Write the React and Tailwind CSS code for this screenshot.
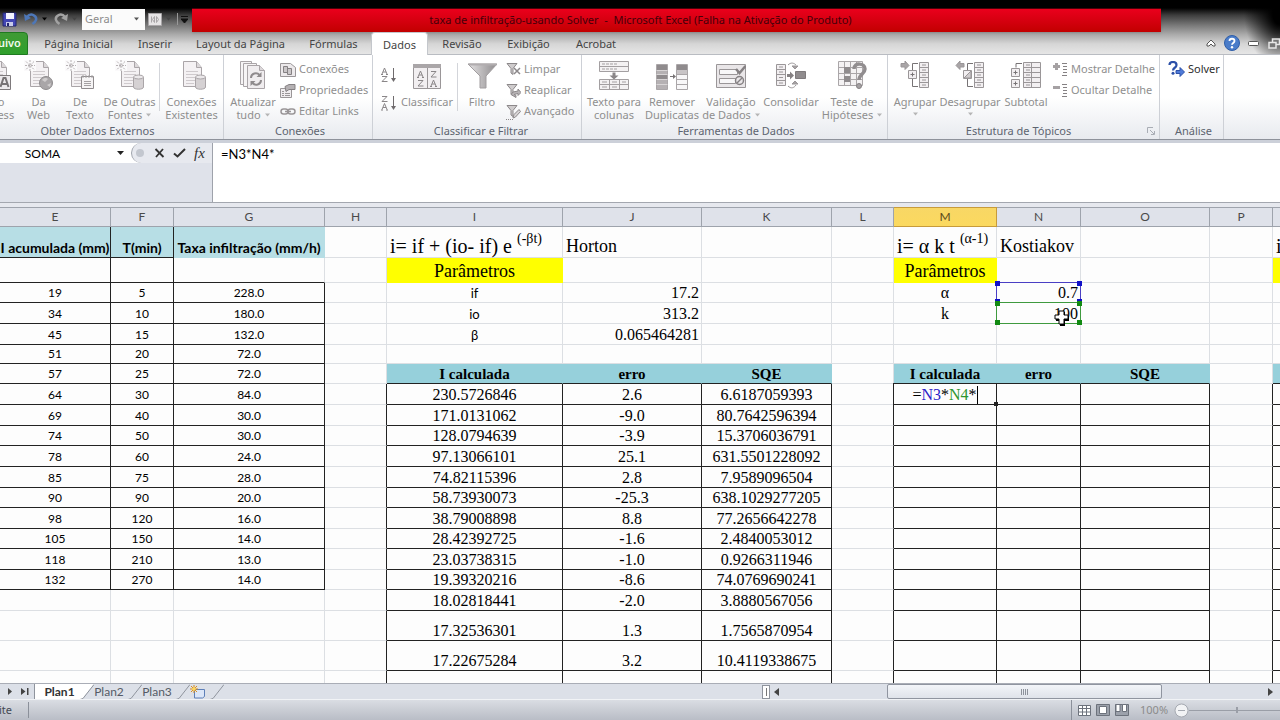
import React from "react";

const UI = "font-['Noto_Sans',sans-serif]";

/* ---------- small shared drawings ---------- */

function Caret({ className = "" }) {
  return (
    <svg className={className} width="7" height="4" viewBox="0 0 7 4" aria-hidden="true">
      <path d="M0 0h7L3.5 4z" fill="currentColor" />
    </svg>
  );
}

function Page({ children, spark = true, cyl = false }) {
  return (
    <svg width="30" height="30" viewBox="0 0 30 30" fill="none" stroke="#aaa5a8" aria-hidden="true">
      <path d="M6.500 1.500h13l5 6v19h-18z" fill="#f4f1f3" />
      <path d="M19.500 1.500v6h5" fill="#dcd8da" />
      <path d="M9 11.500h12M9 14.500h12M9 17.500h12M9 20.500h10M9 23.500h8" stroke="#cfcacd" />
      {spark && (
        <>
          <path d="M0 0h12v11h-12z" fill="#fbfafb" stroke="none" />
          <path d="M6 0v11M1 5.500h10M2 1.500l8 8M10 1.500l-8 8" stroke="#b7b2b4" strokeDasharray="2 1" />
        </>
      )}
      {cyl && (
        <>
          <path d="M18.500 17v10c0 3 10 3 10 0v-10" fill="#d5d1d3" />
          <ellipse cx="23.500" cy="17" rx="5" ry="2" fill="#ebe8ea" />
        </>
      )}
      {children}
    </svg>
  );
}

function WebIcon() {
  return (
    <Page>
      <circle cx="22" cy="23" r="6.500" fill="#a9a6a8" stroke="#8f8c8e" />
      <path d="M18 20c2-3 5-2 6-1l-3 3zM23 25l4-2-1 4z" fill="#cfcccd" stroke="none" />
    </Page>
  );
}

function TextIcon() {
  return (
    <Page>
      <path d="M16.500 16.500h12v12h-12z" fill="#f6f4f5" stroke="#8f8b8d" />
      <path d="M18 15v3M21 15v3M24 15v3M27 15v3M19 21.500h7M19 23.500h7M19 25.500h7" stroke="#a5a1a3" />
    </Page>
  );
}

function AccessIcon() {
  return (
    <Page>
      <path d="M15.500 15.500h13v14h-13z" fill="#ece9eb" stroke="#7e7a7c" />
      <path d="M18.500 27l3-9h2l3 9M19.500 24h6" stroke="#777375" strokeWidth="2" />
    </Page>
  );
}

function RefreshIcon() {
  return (
    <svg width="30" height="30" viewBox="0 0 30 30" fill="none" stroke="#aaa5a8" aria-hidden="true">
      <path d="M2.500 1.500h11v23h-11z" fill="#f6f4f5" />
      <path d="M5.500 3.500h13v23h-13z" fill="#f6f4f5" />
      <path d="M9.500 5.500h12l5 5v18h-17z" fill="#f0edef" />
      <path d="M21.500 5.500v5h5" fill="#dcd8da" />
      <path d="M13 18c0-5 6-6 8.500-3M23 20c0 5-6 6-8.500 3" stroke="#8f8b8d" strokeWidth="2" />
      <path d="M23.500 12v5h-5zM12.500 26v-5h5z" fill="#8f8b8d" stroke="none" />
    </svg>
  );
}

function SortBoxIcon() {
  return (
    <svg width="30" height="30" viewBox="0 0 30 30" fill="none" stroke="#9a9698" aria-hidden="true">
      <path d="M1.500 4.500h27v24h-27z" fill="#f2eff1" />
      <path d="M1 4h28v4h-28z" fill="#aaa6a8" stroke="none" />
      <path d="M15.500 8v20" />
      <path d="M6 17l2.500-6 2.500 6M7 15h3M5 17.500h2M10 17.500h2M6 20.500h5l-5 5.500h5.500M19 11.500h5l-5 5.500h5.500M19 26l2.500-6 2.500 6M20 24h3M18 26.500h2M23 26.500h2" stroke="#8a8688" />
    </svg>
  );
}

function SortIcon({ down = true }) {
  return (
    <svg width="16" height="16" viewBox="0 0 16 16" fill="none" stroke="#8a8688" aria-hidden="true">
      {down ? (
        <path d="M1 7l2.500-6 2.500 6M2 5h3M0 7.500h2M5 7.500h2M1 9.500h5l-5 5h5.500" />
      ) : (
        <path d="M1 1.500h5l-5 5h5.500M1 14.500l2.500-6 2.500 6M2 12.500h3M0 15h2M5 15h2" />
      )}
      <path d="M12.500 1v11" stroke="#6f6b6d" />
      <path d="M10 11h5l-2.500 4z" fill="#6f6b6d" stroke="none" />
    </svg>
  );
}

function FunnelIcon() {
  return (
    <svg width="30" height="30" viewBox="0 0 30 30" aria-hidden="true">
      <defs>
        <linearGradient id="funnel" x1="0" x2="1" y1="0" y2="0">
          <stop offset="0" stopColor="#e4e2e3" />
          <stop offset="1" stopColor="#8e8b8d" />
        </linearGradient>
      </defs>
      <path d="M1 4h29l-11 12v12h-6v-12z" fill="url(#funnel)" stroke="#a19d9f" />
      <path d="M1.500 3.500h28v2h-27z" fill="#b1adaf" />
    </svg>
  );
}

function MiniFunnel({ kind }) {
  return (
    <svg width="15" height="16" viewBox="0 0 15 16" fill="none" stroke="#8c888a" aria-hidden="true">
      <path d="M1 1.500h10l-4 5v6l-2-1.500v-4.500z" fill="#cfcccd" />
      {kind === "clear" && <path d="M8 6l6 6M14 6l-6 6" strokeWidth="1.500" />}
      {kind === "again" && <path d="M7 9l5-1v-2l3 3.500-3 3v-2l-4 1 2 1v2l-5-3z" fill="#b8b4b6" />}
      {kind === "adv" && (
        <>
          <path d="M7 14l1-3.500 5-5 1.500 2-5 5.500z" fill="#d8d5d6" />
          <path d="M0 15.500h8" strokeDasharray="1 1" />
        </>
      )}
    </svg>
  );
}

function ConnIcon() {
  return (
    <svg width="16" height="16" viewBox="0 0 16 16" fill="none" stroke="#9a9698" aria-hidden="true">
      <path d="M.5 1.500h10l5 4v9h-15z" fill="#ece9eb" />
      <path d="M3.500 4.500h4v6h-4zM7.500 6.500h4v6h-4z" fill="#cbc7c9" stroke="#858183" />
    </svg>
  );
}

function PropIcon() {
  return (
    <svg width="16" height="16" viewBox="0 0 16 16" fill="none" stroke="#9a9698" aria-hidden="true">
      <path d="M.5 5.500h11v9h-11z" fill="#f0edef" />
      <path d="M5 3.500l4-2h6v5h-6l-3 2z" fill="#b5b1b3" stroke="#858183" />
      <path d="M2 8.500h2M5 10.500h5M2 10.500h2M2 12.500h2M5 12.500h5" />
    </svg>
  );
}

function LinkIcon() {
  return (
    <svg width="16" height="16" viewBox="0 0 16 16" fill="none" stroke="#9a9698" strokeWidth="1.500" aria-hidden="true">
      <rect x="1" y="5" width="7" height="5" rx="2.500" />
      <rect x="8" y="5" width="7" height="5" rx="2.500" />
      <path d="M5 7.500h6" />
    </svg>
  );
}

function TextColsIcon() {
  return (
    <svg width="30" height="30" viewBox="0 0 30 30" fill="none" stroke="#a39fa1" aria-hidden="true">
      <path d="M.5 1.500h29v10h-29z" fill="#f4f2f3" />
      <path d="M.5 6.500h29" />
      <path d="M3 4h15M3 9h15" strokeDasharray="3 1" />
      <path d="M13.500 12.500h3v3h3l-4.500 4-4.500-4h3z" fill="#8a8688" stroke="none" />
      <path d="M.5 19.500h29v10h-29zM10.500 19.500v10M20.500 19.500v10M.5 24.500h29" fill="#f4f2f3" />
      <path d="M3 22h5M13 22h5M23 22h4M3 27h5M13 27h5" />
    </svg>
  );
}

function DupIcon() {
  return (
    <svg width="32" height="30" viewBox="0 0 32 30" fill="none" stroke="#aaa6a8" aria-hidden="true">
      <path d="M.5 4.500h11v25h-11z" fill="#b5b1b3" />
      <path d="M1 5h10v5h-10zM1 15h10v4h-10z" fill="#8f8b8d" stroke="none" />
      <path d="M.5 10.500h11M.5 14.500h11M.5 19.500h11M.5 24.500h11" stroke="#d8d5d6" />
      <path d="M14 16.500h4" stroke="#777375" />
      <path d="M17 14l3 2.500-3 2.500z" fill="#777375" stroke="none" />
      <path d="M20.500 4.500h11v25h-11z" fill="#f8f7f8" />
      <path d="M21 5h10v5h-10z" fill="#8f8b8d" stroke="none" />
      <path d="M21 10h10v4h-10z" fill="#c8c4c6" stroke="none" />
      <path d="M20.500 14.500h11M20.500 19.500h11M20.500 24.500h11" />
    </svg>
  );
}

function ValidIcon() {
  return (
    <svg width="30" height="30" viewBox="0 0 30 30" fill="none" stroke="#9a9698" aria-hidden="true">
      <path d="M.5 4.500h29v23h-29z" fill="#e9e6e8" />
      <path d="M3.500 9.500h18v5h-18zM3.500 18.500h16v5h-16z" fill="#f8f7f8" />
      <path d="M20 9l3.500 4 6-7" stroke="#858183" strokeWidth="2.500" />
      <circle cx="23.500" cy="20.500" r="4" stroke="#858183" strokeWidth="1.500" fill="#e9e6e8" />
      <path d="M21 23l5-5" stroke="#858183" strokeWidth="1.500" />
    </svg>
  );
}

function ConsolidateIcon() {
  return (
    <svg width="30" height="30" viewBox="0 0 30 30" fill="none" stroke="#9a9698" aria-hidden="true">
      <path d="M.5 4.500h9v21h-9z" fill="#f2eff1" />
      <path d="M.5 9.500h9M.5 14.500h9M.5 20.500h9M3 7h4M3 12h4M3 17.500h4M3 23h4" />
      <path d="M12 5c3-3 6-2 8 0M12 26c3 3 6 2 8-1" />
      <path d="M16 6h6l-3 3zM16 24h6l-3-3z" fill="#a5a1a3" />
      <path d="M11 14h3v-2.500l4 4-4 4v-2.500h-3z" fill="#858183" stroke="none" />
      <path d="M19.500 11.500h10v7h-10z" fill="#908c8e" stroke="#7e7a7c" />
    </svg>
  );
}

function WhatIfIcon() {
  return (
    <svg width="30" height="30" viewBox="0 0 30 30" fill="none" stroke="#aaa6a8" aria-hidden="true">
      <path d="M1.500 1.500h24v24h-24z" fill="#f4f2f3" />
      <path d="M1.500 7.500h24M1.500 13.500h24M1.500 19.500h24M7.500 1.500v24M13.500 1.500v24M19.500 1.500v24" />
      <path d="M7 7h6v6h-6zM7 16h6v6h-6z" fill="#8f8b8d" stroke="none" />
      <path d="M17 9c0-7 11-6 11 0 0 5-6 5-6 11" stroke="#918d8f" strokeWidth="3.500" />
      <circle cx="22" cy="26" r="2.500" fill="#a5a1a3" stroke="#858183" />
    </svg>
  );
}

function GroupIcon({ out = false }) {
  return (
    <svg width="30" height="30" viewBox="0 0 30 30" fill="none" stroke="#9a9698" aria-hidden="true">
      <path d="M19.500 2.500h9v25h-9z" fill="#f2eff1" />
      <path d="M19.500 7.500h9M19.500 12.500h9M19.500 17.500h9M19.500 22.500h9M22 5h4M22 10h4M22 15h4M22 20h4M22 25h4" />
      <path d="M18 3.500h-5.500v8M12.500 19v7.500h5.500" stroke="#777375" />
      <path d="M8.500 10.500h8v8h-8z" fill="#f2eff1" />
      {out ? <path d="M9 18l7-7v7z" fill="#d0ccce" /> : <path d="M10.500 14.500h4M12.500 12.500v4" stroke="#777375" />}
      {out ? (
        <path d="M9 3.500h-4v-2.500l-4 4.500 4 4v-2.500h4z" fill="#a9a5a7" />
      ) : (
        <path d="M1 3.500h4v-2.500l4 4.500-4 4v-2.500h-4z" fill="#a9a5a7" />
      )}
    </svg>
  );
}

function SubtotalIcon() {
  return (
    <svg width="30" height="30" viewBox="0 0 30 30" fill="none" stroke="#9a9698" aria-hidden="true">
      <path d="M12.500 2.500h17v25h-17z" fill="#f2eff1" />
      <path d="M12.500 7.500h17M12.500 12.500h17M12.500 17.500h17M12.500 22.500h17M20.500 2.500v25M15 5h4M15 10h4M15 15h4M15 20h4M15 25h4" />
      <path d="M11 3.500h-6v4" stroke="#777375" />
      <path d="M.5 8.500h8v8h-8zM.5 19.500h8v8h-8z" fill="#f2eff1" />
      <path d="M2.500 12.500h4M4.500 10.500v4M2.500 23.500h4M4.500 21.500v4" stroke="#777375" />
    </svg>
  );
}

function DetailIcon({ plus = false }) {
  return (
    <svg width="16" height="16" viewBox="0 0 16 16" fill="none" stroke="#858183" aria-hidden="true">
      {plus ? <path d="M3 1h3v2h2v3h-2v2h-3v-2h-2v-3h2z" fill="#a5a1a3" stroke="none" /> : <path d="M1 3h7v3h-7z" fill="#a5a1a3" stroke="none" />}
      <path d="M10 1.500h5M11 4.500h4M11 7.500h4M11 10.500h4M10 13.500h5" />
    </svg>
  );
}

function SolverIcon() {
  return (
    <svg width="17" height="17" viewBox="0 0 17 17" fill="none" aria-hidden="true">
      <path d="M1.500 4c0-4 7-4 7 0 0 3-3.500 2.500-3.500 5.500" stroke="#2c50a8" strokeWidth="2.200" />
      <circle cx="5" cy="12.300" r="1.500" fill="#2c50a8" />
      <path d="M8 9.500h4v-3l4.500 4.500-4.500 4.500v-3h-4z" fill="#4f7bd8" stroke="#2c50a8" />
    </svg>
  );
}

/* ---------- ribbon pieces ---------- */

function Big({ icon, lines, caret = false, className }) {
  return (
    <button type="button" className={`flex shrink-0 flex-col items-center text-[11px] leading-[13px] text-[#8f8f8f] ${className}`}>
      <span className="mt-1 mb-1 flex h-8 items-center">{icon}</span>
      {lines.map((l, i) => (
        <span key={l} className="flex items-center gap-1 whitespace-nowrap">
          {l}
          {caret && lines.length > 1 && i === lines.length - 1 && <Caret className="w-[5px] text-[#b5b5b5]" />}
        </span>
      ))}
      {caret && lines.length === 1 && <Caret className="mt-1 w-[5px] text-[#b5b5b5]" />}
    </button>
  );
}

function Small({ icon, text, dark = false }) {
  return (
    <button type="button" className={`flex h-[21px] items-center gap-[3px] text-[11px] whitespace-nowrap ${dark ? "text-[#2d2d2d]" : "text-[#8f8f8f]"}`}>
      {icon}
      {text}
    </button>
  );
}

function Group({ title, className, launcher = false, children }) {
  return (
    <section className={`flex shrink-0 flex-col border-r border-[#cdd0d6] ${className}`}>
      <div className="flex h-[68px]">{children}</div>
      <div className="flex h-4 items-center pr-[26px] text-[11px] text-[#5d6470] only:pr-0 has-[button]:pr-1 has-[.wide]:pr-0">
        <span className="wide flex-1 text-center whitespace-nowrap">{title}</span>
        {launcher && (
          <button type="button" aria-label={`Mais opções de ${title}`} className="mr-1">
            <svg width="8" height="8" viewBox="0 0 8 8" fill="none" stroke="#a9adb5">
              <path d="M.5 6v-5.500h5.500M3 3l4 4M7.500 4v3.500h-3.500" />
            </svg>
          </button>
        )}
      </div>
    </section>
  );
}

const Divider = () => <span className="mt-2 h-12 w-px shrink-0 bg-[#d3d5da]" />;

function Ribbon() {
  return (
    <div className="flex h-[85px] shrink-0 overflow-hidden border-b border-[#8e929b] bg-linear-to-b from-white from-50% to-[#e8eaef]">
      <section className="flex w-[224px] shrink-0 flex-col border-r border-[#cdd0d6]">
        <div className="flex h-[68px] pl-px">
          <Big icon={<AccessIcon />} lines={["Do", "Access"]} className="-ml-[24px] w-10" />
          <Big icon={<WebIcon />} lines={["Da", "Web"]} className="w-[43px]" />
          <Big icon={<TextIcon />} lines={["De", "Texto"]} className="w-10" />
          <Big icon={<Page cyl />} lines={["De Outras", "Fontes"]} caret className="w-[59px]" />
          <Divider />
          <Big icon={<Page cyl spark={false} />} lines={["Conexões", "Existentes"]} className="w-[63px]" />
        </div>
        <div className="flex h-4 items-center justify-center pr-7 text-[11px] text-[#5d6470]">Obter Dados Externos</div>
      </section>
      <Group title="Conexões" className="w-[149px] pl-1">
        <Big icon={<RefreshIcon />} lines={["Atualizar", "tudo"]} caret className="w-[50px]" />
        <div className="flex flex-col pt-1 pl-[2px]">
          <Small icon={<ConnIcon />} text="Conexões" />
          <Small icon={<PropIcon />} text="Propriedades" />
          <Small icon={<LinkIcon />} text="Editar Links" />
        </div>
      </Group>
      <Group title="Classificar e Filtrar" className="w-[209px] pl-2">
        <div className="flex w-4 flex-col gap-3 pt-3">
          <button type="button" aria-label="Classificar de A a Z"><SortIcon /></button>
          <button type="button" aria-label="Classificar de Z a A"><SortIcon down={false} /></button>
        </div>
        <Big icon={<SortBoxIcon />} lines={["Classificar"]} className="w-[60px]" />
        <Divider />
        <Big icon={<FunnelIcon />} lines={["Filtro"]} className="w-12" />
        <div className="flex flex-col pt-1">
          <Small icon={<MiniFunnel kind="clear" />} text="Limpar" />
          <Small icon={<MiniFunnel kind="again" />} text="Reaplicar" />
          <Small icon={<MiniFunnel kind="adv" />} text="Avançado" />
        </div>
      </Group>
      <Group title="Ferramentas de Dados" className="w-[306px] pl-[3px]">
        <Big icon={<TextColsIcon />} lines={["Texto para", "colunas"]} className="w-[58px]" />
        <Big icon={<DupIcon />} lines={["Remover", "Duplicatas"]} className="w-[58px]" />
        <Big icon={<ValidIcon />} lines={["Validação", "de Dados"]} caret className="w-[60px]" />
        <Big icon={<ConsolidateIcon />} lines={["Consolidar"]} className="w-[60px]" />
        <Big icon={<WhatIfIcon />} lines={["Teste de", "Hipóteses"]} caret className="w-[62px]" />
      </Group>
      <Group title="Estrutura de Tópicos" launcher className="w-[272px] pl-[2px]">
        <Big icon={<GroupIcon />} lines={["Agrupar"]} caret className="w-[50px]" />
        <Big icon={<GroupIcon out />} lines={["Desagrupar"]} caret className="w-[60px]" />
        <Big icon={<SubtotalIcon />} lines={["Subtotal"]} className="w-[52px]" />
        <div className="flex flex-col pt-1">
          <Small icon={<DetailIcon plus />} text="Mostrar Detalhe" />
          <Small icon={<DetailIcon />} text="Ocultar Detalhe" />
        </div>
      </Group>
      <Group title="Análise" className="w-16 pl-1">
        <div className="flex flex-col pt-1 pl-1">
          <Small icon={<SolverIcon />} text="Solver" dark />
        </div>
      </Group>
    </div>
  );
}

/* ---------- window header ---------- */

const TABS = [
  ["Página Inicial", "w-[93px]"],
  ["Inserir", "w-[60px]"],
  ["Layout da Página", "w-[111px]"],
  ["Fórmulas", "w-[75px]"],
  ["Dados", "w-[57px]"],
  ["Revisão", "w-[68px]"],
  ["Exibição", "w-[65px]"],
  ["Acrobat", "w-[70px]"],
];

function Header() {
  return (
    <header className="shrink-0 bg-[radial-gradient(ellipse_36px_52px_at_100%_14px,#000_20%,transparent),linear-gradient(to_bottom,#000_8px,#3c3c3c_15px,#777_25px,#a8a8a8_34px,#d6d6d6_44px,#e6e6e6_54px)]">
      <div className="flex h-8 items-start pt-2">
        <div className="flex h-[22px] w-48 shrink-0 items-center">
          <button type="button" aria-label="Salvar" className="ml-[2px]">
            <svg width="15" height="15" viewBox="0 0 15 15">
              <path d="M1 1h13v13H1z" fill="#4347b4" stroke="#23266e" />
              <path d="M4 1h8v6H4z" fill="#f4f5ff" />
              <path d="M4 10h7v4H4z" fill="#c8cbea" />
              <path d="M5 11h2v3H5z" fill="#23266e" />
            </svg>
          </button>
          <button type="button" aria-label="Desfazer" className="ml-[7px]">
            <svg width="14" height="14" viewBox="0 0 14 14" fill="none">
              <path d="M3 5c4-5 10-1 9 3-.5 2-2 3-3.500 4" stroke="#4d77b8" strokeWidth="2.500" />
              <path d="M0 2l1 7 6-3z" fill="#4d77b8" />
            </svg>
          </button>
          <Caret className="ml-1 w-[5px] text-black" />
          <button type="button" aria-label="Refazer" className="ml-[7px]">
            <svg width="14" height="14" viewBox="0 0 14 14" fill="none">
              <path d="M11 5c-4-5-10-1-9 3 .5 2 2 3 3.500 4" stroke="#a2a2a2" strokeWidth="2.500" />
              <path d="M14 2l-1 7-6-3z" fill="#a2a2a2" />
            </svg>
          </button>
          <Caret className="ml-1 w-[5px] text-[#444]" />
          <label className="ml-[5px] flex h-[21px] w-[63px] shrink-0 items-center bg-[#fbfbfb] pl-[3px] text-[11px] text-[#8b8b8b]">
            <select aria-label="Formato de número" defaultValue="Geral" className="w-[49px] appearance-none bg-transparent outline-none">
              <option>Geral</option>
            </select>
            <Caret className="w-[5px] text-[#555]" />
          </label>
          <button type="button" aria-label="Reproduzir" className="ml-[3px]">
            <svg width="14" height="13" viewBox="0 0 14 13" fill="none" stroke="#a9a6a8">
              <path d="M.5.5h13v12h-13z" fill="#e6e4e5" />
              <path d="M3.500 3.500v6M6.500 3.500l-2 3 2 3zM8.500 3.500l2 3-2 3z" />
            </svg>
          </button>
          <Caret className="ml-1 w-[5px] text-[#444]" />
          <span className="ml-[6px] h-3 w-px bg-[#999]" />
          <button type="button" aria-label="Personalizar barra" className="ml-[3px]">
            <svg width="7" height="7" viewBox="0 0 7 7">
              <path d="M0 .5h7M0 3h7L3.500 7z" fill="#111" stroke="#111" />
            </svg>
          </button>
        </div>
        <h1 className="mr-[119px] flex h-6 flex-1 items-center justify-center overflow-hidden border-t border-[#4a0008] bg-linear-to-b from-[#ea001c] to-[#c20000] pr-[72px] text-[11px] whitespace-pre text-[#45000a] shadow-sm">
          taxa de infiltração-usando Solver  -  Microsoft Excel (Falha na Ativação do Produto)
        </h1>
      </div>
      <nav className="flex h-[23px] items-stretch border-b border-[#b9bcc2] text-[11px] text-[#444]">
        <button type="button" className="-ml-6 h-[23px] w-[52px] shrink-0 rounded-tr-sm border border-[#1f7a20] bg-linear-to-b from-[#3f9a35] to-[#2fa02c] pr-1 font-semibold text-[#f1fbef]">
          Arquivo
        </button>
        <span className="w-1 shrink-0" />
        {TABS.map(([name, w]) => (
          <button
            key={name}
            type="button"
            className={`shrink-0 pt-[2px] whitespace-nowrap ${w} ${name === "Dados" ? "-mb-px rounded-t-sm border-x border-t border-[#c4c7cc] bg-white" : ""}`}
          >
            {name}
          </button>
        ))}
        <div className="ml-auto flex shrink-0 items-center">
          <button type="button" aria-label="Minimizar faixa" className="mr-2">
            <svg width="10" height="8" viewBox="0 0 10 8" fill="#fff" stroke="#555">
              <path d="M1 5l4-4 4 4v2h-2l-2-2-2 2h-2z" />
            </svg>
          </button>
          <button type="button" aria-label="Ajuda" className="mr-2">
            <svg width="16" height="16" viewBox="0 0 16 16" fill="none">
              <circle cx="8" cy="8" r="7.500" fill="#4a7cc9" stroke="#2f5ea8" />
              <path d="M5.500 6c0-3 5-3 5 0 0 2-2.500 2-2.500 3.800" stroke="#fff" strokeWidth="1.800" />
              <circle cx="8" cy="12.200" r="1.200" fill="#fff" />
            </svg>
          </button>
          <button type="button" aria-label="Minimizar" className="mr-[9px]">
            <svg width="11" height="5" viewBox="0 0 11 5" fill="#fff" stroke="#555">
              <rect x=".5" y=".5" width="10" height="4" rx="1" />
            </svg>
          </button>
          <button type="button" aria-label="Restaurar">
            <svg width="12" height="11" viewBox="0 0 12 11" fill="#777" stroke="#e6e6e6" strokeWidth="1.500">
              <path d="M4.500 1h7v5.500h-7z" />
              <path d="M1 4.500h7v5.500h-7z" />
            </svg>
          </button>
        </div>
      </nav>
    </header>
  );
}

function FormulaBar() {
  return (
    <div className="flex h-[60px] shrink-0 border-b border-[#a3a7af] bg-[#dfe2ea] font-[Lato,sans-serif] text-[12px]">
      <div className="h-5 w-[212px] shrink-0 border-b border-[#b4b8c0]">
        <div className="flex h-5 items-center">
          <input aria-label="Caixa de nome" defaultValue="SOMA" className="h-full w-[117px] bg-white pr-8 text-center text-black outline-none" />
          <button type="button" aria-label="Nomes" className="flex h-full w-[14px] items-center bg-white text-[#222]">
            <Caret />
          </button>
          <div className="flex h-full flex-1 items-center bg-white">
            <div className="flex h-full flex-1 items-center rounded-l-full border-l border-[#9ea2ab] bg-[#e7e9ef]">
              <span className="ml-1 h-2 w-2 rounded-full bg-[#c3c7cf]" />
              <button type="button" aria-label="Cancelar" className="ml-[10px]">
                <svg width="11" height="10" viewBox="0 0 11 10" fill="none" stroke="#333" strokeWidth="1.800">
                  <path d="M1.500 1l8 8M9 1l-7 8" />
                </svg>
              </button>
              <button type="button" aria-label="Inserir" className="ml-2">
                <svg width="13" height="10" viewBox="0 0 13 10" fill="none" stroke="#333" strokeWidth="2">
                  <path d="M1 5.500l3.500 3L12 1" />
                </svg>
              </button>
              <button type="button" aria-label="Inserir função" className="ml-2 font-['Liberation_Serif',serif] text-[15px] text-[#333] italic">
                fx
              </button>
            </div>
          </div>
        </div>
      </div>
      <textarea
        aria-label="Barra de fórmulas"
        defaultValue="=N3*N4*"
        className="min-w-0 flex-1 resize-none border-l border-[#9ea2ab] bg-white px-2 pt-[2px] text-[13px] leading-[18px] text-black outline-none"
      />
    </div>
  );
}

/* ---------- worksheet ---------- */

const COLS = [
  ["E", "w-[111px]"],
  ["F", "w-[63px]"],
  ["G", "w-[151px]"],
  ["H", "w-[62px]"],
  ["I", "w-[176px]"],
  ["J", "w-[139px]"],
  ["K", "w-[130px]"],
  ["L", "w-[62px]"],
  ["M", "w-[103px]"],
  ["N", "w-[84px]"],
  ["O", "w-[129px]"],
  ["P", "w-[63px]"],
  ["Q", "w-[140px]"],
];

const HEIGHTS = [
  "h-[31px]", "h-[25px]", "h-[20px]", "h-[21px]", "h-[21px]", "h-[19px]", "h-[20px]",
  "h-[21px]", "h-[21px]", "h-[20px]", "h-[21px]", "h-[21px]", "h-[20px]", "h-[21px]",
  "h-[20px]", "h-[21px]", "h-[20px]", "h-[21px]", "h-[30px]", "h-[30px]", "h-[30px]",
];

const MEASURED = [
  [19, 5, "228.0"], [34, 10, "180.0"], [45, 15, "132.0"], [51, 20, "72.0"], [57, 25, "72.0"],
  [64, 30, "84.0"], [69, 40, "30.0"], [74, 50, "30.0"], [78, 60, "24.0"], [85, 75, "28.0"],
  [90, 90, "20.0"], [98, 120, "16.0"], [105, 150, "14.0"], [118, 210, "13.0"], [132, 270, "14.0"],
];

const HORTON = [
  ["230.5726846", "2.6", "6.6187059393"],
  ["171.0131062", "-9.0", "80.7642596394"],
  ["128.0794639", "-3.9", "15.3706036791"],
  ["97.13066101", "25.1", "631.5501228092"],
  ["74.82115396", "2.8", "7.9589096504"],
  ["58.73930073", "-25.3", "638.1029277205"],
  ["38.79008898", "8.8", "77.2656642278"],
  ["28.42392725", "-1.6", "2.4840053012"],
  ["23.03738315", "-1.0", "0.9266311946"],
  ["19.39320216", "-8.6", "74.0769690241"],
  ["18.02818441", "-2.0", "3.8880567056"],
  ["17.32536301", "1.3", "1.7565870954"],
  ["17.22675284", "3.2", "10.4119338675"],
];

function Handles({ color }) {
  const box = color === "blue" ? "border-[#4a3fc4]" : "border-[#3f9a3f]";
  const dot = color === "blue" ? "bg-[#1010c8]" : "bg-[#128a12]";
  return (
    <span className={`pointer-events-none absolute -inset-px z-10 border ${box}`}>
      <i className={`absolute -top-0.5 -left-0.5 size-[5px] ${dot}`} />
      <i className={`absolute -top-0.5 -right-0.5 size-[5px] ${dot}`} />
      <i className={`absolute -bottom-0.5 -left-0.5 size-[5px] ${dot}`} />
      <i className={`absolute -right-0.5 -bottom-0.5 size-[5px] ${dot}`} />
    </span>
  );
}

function CrossCursor() {
  return (
    <svg className="absolute top-1.5 right-[10px] z-20" width="16" height="18" viewBox="0 0 16 18" aria-hidden="true">
      <path d="M6 3h5v4h4v5h-4v5H6v-5H2V7h4z" fill="#000" />
      <path d="M5 2h5v4h4v4h-4v5H5v-5H1V6h4z" fill="#fff" stroke="#000" />
    </svg>
  );
}

const SERIF = "font-['Liberation_Serif',serif]";

function content(col, r) {
  if (col <= 2) {
    if (r === 1) return ["I acumulada (mm)", "T(min)", "Taxa infiltração (mm/h)"][col];
    return r >= 3 && r <= 17 ? MEASURED[r - 3][col] : null;
  }
  if (col >= 4 && col <= 6 && r >= 8 && r <= 20) return HORTON[r - 8][col - 4];
  if (r === 7) return { 4: "I calculada", 5: "erro", 6: "SQE", 8: "I calculada", 9: "erro", 10: "SQE" }[col];
  const key = `${COLS[col][0]}${r}`;
  switch (key) {
    case "I1":
      return <>i= if + (io- if) e <sup className="-top-[10px] text-[14px]">(-βt)</sup></>;
    case "M1":
      return <>i= α k t <sup className="-top-[10px] text-[14px]">(α-1)</sup></>;
    case "Q1":
      return "i=";
    case "J1":
      return "Horton";
    case "N1":
      return "Kostiakov";
    case "I2":
    case "M2":
      return "Parâmetros";
    case "I3":
      return "if";
    case "I4":
      return "io";
    case "I5":
      return "β";
    case "J3":
      return "17.2";
    case "J4":
      return "313.2";
    case "J5":
      return "0.065464281";
    case "M3":
      return "α";
    case "M4":
      return "k";
    case "N3":
      return <>0.7<Handles color="blue" /></>;
    case "N4":
      return <>100<Handles color="green" /><CrossCursor /></>;
    case "M8":
      return (
        <>
          <span className="inline-flex">
            =<span className="text-[#2a22c8]">N3</span>*<span className="text-[#2f962f]">N4</span>*
            <span className="w-px bg-black" />
          </span>
          <span className="pointer-events-none absolute -inset-px z-10 border border-[#222]" />
          <i className="absolute -right-0.5 -bottom-0.5 z-10 size-1 bg-[#222]" />
        </>
      );
    default:
      return null;
  }
}

function cellClass(col, r) {
  const inTable = (col >= 4 && col <= 6) || (col >= 8 && col <= 10) || col === 12;
  const cls = ["relative border-r border-b p-0 align-bottom whitespace-nowrap"];

  // fills
  const head = col <= 2 && r === 1;
  const yellow = r === 2 && (col === 4 || col === 8 || col === 12);
  const teal = r === 7 && inTable;
  if (head) cls.push("bg-[#b7dee5]");
  if (yellow) cls.push("bg-[#ffff00]");
  if (teal) cls.push("bg-[#96d0db]");

  // right edge
  if ((col <= 1 && r <= 17) || (col === 2 && r >= 3 && r <= 17)) cls.push("border-r-[#222]");
  else if (r >= 8 && (inTable || col === 3 || col === 7 || col === 11)) cls.push("border-r-[#222]");
  else if (head) cls.push("border-r-[#b7dee5]");
  else if (yellow) cls.push("border-r-[#ffff00]");
  else if (teal) cls.push("border-r-[#96d0db]");
  else cls.push("border-r-[#dcdfe3]");

  // bottom edge
  if ((col <= 1 && r === 1) || (col <= 2 && r >= 2 && r <= 17)) cls.push("border-b-[#222]");
  else if (inTable && r >= 7) cls.push("border-b-[#222]");
  else if (head) cls.push("border-b-[#b7dee5]");
  else if (yellow) cls.push("border-b-[#ffff00]");
  else cls.push("border-b-[#dcdfe3]");

  // text
  if (col <= 2 && r === 1) cls.push("text-center font-[Lato,sans-serif] text-[14px] leading-[18px] font-bold");
  else if (col <= 2) cls.push("text-center font-[Lato,sans-serif] text-[12px] leading-[18px]");
  else if (r === 1) cls.push(`${SERIF} leading-[22px] pl-[3px] text-left ${col === 5 || col === 9 ? "text-[18px]" : "text-[20px]"}`);
  else if (r === 2) cls.push(`${SERIF} text-center text-[18px] leading-[22px]`);
  else if (r === 7) cls.push(`${SERIF} text-center text-[15px] leading-[18px] font-bold`);
  else if (col === 4 && r < 7) cls.push("text-center font-[Lato,sans-serif] text-[13px] leading-[18px]");
  else if ((col === 5 || col === 9) && r < 7) cls.push(`${SERIF} pr-[2px] text-right text-[16px] leading-[18px]`);
  else cls.push(`${SERIF} text-center text-[16px] leading-[18px]`);
  return cls.join(" ");
}

function Sheet() {
  return (
    <main className="min-h-0 flex-1 overflow-hidden bg-[#fdfdfd] text-black">
      <table className="w-full table-fixed border-separate border-spacing-0">
        <colgroup>
          {COLS.map(([name, w]) => (
            <col key={name} className={w} />
          ))}
        </colgroup>
        <thead>
          <tr className="h-5">
            {COLS.map(([name]) => (
              <th
                key={name}
                scope="col"
                className={`border-t border-r border-b p-0 font-[Lato,sans-serif] text-[12px] leading-[18px] font-normal ${
                  name === "M"
                    ? "border-[#c79b3b] bg-linear-to-b from-[#f8d765] to-[#fbd95f] text-[#5b4a1c]"
                    : "border-[#9ea3ac] bg-[#dfe2ea] text-[#4a4a4a]"
                }`}
              >
                {name}
              </th>
            ))}
          </tr>
        </thead>
        <tbody>
          {HEIGHTS.map((h, i) => (
            <tr key={i} className={h}>
              {COLS.map(([name], c) => (
                <td key={name} className={cellClass(c, i + 1)}>
                  {content(c, i + 1)}
                </td>
              ))}
            </tr>
          ))}
        </tbody>
      </table>
    </main>
  );
}

/* ---------- bottom bars ---------- */

function Slash({ white = false }) {
  return (
    <svg width="14" height="16" viewBox="0 0 14 16" className="shrink-0" aria-hidden="true">
      {white && <path d="M0 0h14L2 15H0z" fill="#fff" />}
      <path d="M14 .5L3 14.500l-3 1" fill="none" stroke="#8f949d" />
    </svg>
  );
}

function SheetTabs() {
  return (
    <div className="flex h-4 shrink-0 items-stretch border-t border-[#a9adb6] bg-[#dce0e8] font-[Lato,sans-serif] text-[12px] leading-[15px] text-[#555b66]">
      <div className="flex w-[35px] shrink-0 items-center gap-2 border-r border-[#8f949d] pl-[7px]">
        <button type="button" aria-label="Próxima planilha">
          <svg width="6" height="7" viewBox="0 0 6 7"><path d="M1 0l4 3.500L1 7z" fill="#444" /></svg>
        </button>
        <button type="button" aria-label="Última planilha">
          <svg width="8" height="7" viewBox="0 0 8 7"><path d="M0 0l4.500 3.500L0 7zM6 0h1.500v7H6z" fill="#444" /></svg>
        </button>
      </div>
      <button type="button" className="w-[45px] bg-white pl-1 font-bold text-[#333]">Plan1</button>
      <Slash white />
      <button type="button" className="w-[34px] pr-1">Plan2</button>
      <Slash />
      <button type="button" className="w-[34px] pr-1">Plan3</button>
      <Slash />
      <button type="button" aria-label="Inserir planilha" className="flex w-5 items-center">
        <svg width="16" height="14" viewBox="0 0 16 14">
          <path d="M4.500 4.500h10v7l-2 1.500h-8z" fill="#dbe6f8" stroke="#5d7fb8" />
          <path d="M4 0v8M0 4h8M1 1l6 6M7 1L1 7" stroke="#d98c1f" />
          <circle cx="4" cy="4" r="1.800" fill="#ffd75a" />
        </svg>
      </button>
      <Slash />
      <div className="ml-auto flex w-[518px] shrink-0 items-center">
        <span className="flex h-[14px] w-2 justify-center border border-[#8f949d] bg-white py-0.5"><i className="w-px bg-[#777]" /></span>
        <button type="button" aria-label="Rolar à esquerda" className="ml-1">
          <svg width="6" height="8" viewBox="0 0 6 8"><path d="M5 0v8L0 4z" fill="#444" /></svg>
        </button>
        <div className="ml-[107px] flex h-[15px] w-[275px] items-center justify-center gap-px rounded-xs border border-[#9095a0] bg-linear-to-b from-[#f3f5f9] to-[#dfe3ea]">
          <i className="h-[6px] w-px bg-[#8d929b]" />
          <i className="h-[6px] w-px bg-[#8d929b]" />
          <i className="h-[6px] w-px bg-[#8d929b]" />
          <i className="h-[6px] w-px bg-[#8d929b]" />
        </div>
        <button type="button" aria-label="Rolar à direita" className="mr-[6px] ml-auto">
          <svg width="6" height="8" viewBox="0 0 6 8"><path d="M0 0v8l5-4z" fill="#444" /></svg>
        </button>
      </div>
    </div>
  );
}

function StatusBar() {
  return (
    <footer className="flex h-[21px] shrink-0 items-center overflow-hidden border-t border-[#f1f3f6] bg-linear-to-b from-[#dadde3] to-[#b9bdc6] text-[11px] text-[#444a54]">
      <span className="-ml-4 w-7 text-right">Edite</span>
      <span className="ml-4 h-4 w-px bg-[#8b909a]" />
      <div className="ml-auto flex shrink-0 items-center">
        <span className="h-5 w-px bg-[#8b909a]" />
        <button type="button" aria-label="Normal" className="ml-[6px]">
          <svg width="13" height="11" viewBox="0 0 13 11" fill="#fff" stroke="#6d727c"><path d="M.5.5h12v10H.5zM.5 3.500h12M.5 7h12M4.500.5v10M8.500.5v10" /></svg>
        </button>
        <button type="button" aria-label="Layout da Página" className="ml-[5px]">
          <svg width="14" height="12" viewBox="0 0 14 12" fill="#9ca1ab" stroke="#6d727c"><path d="M.5.5h13v11H.5z" /><path d="M3.500 2.500h7v7h-7z" fill="#fff" /></svg>
        </button>
        <button type="button" aria-label="Visualização de quebra" className="ml-[5px]">
          <svg width="14" height="12" viewBox="0 0 14 12" fill="#9ca1ab" stroke="#6d727c"><path d="M.5.5h13v11H.5z" /><path d="M1 .5h4v7H1zM7.500.5h4v7h-4z" fill="#fff" /></svg>
        </button>
        <span className="ml-[11px] w-[27px] text-[#8b8b8b]">100%</span>
        <button type="button" aria-label="Reduzir zoom" className="ml-[7px]">
          <svg width="15" height="15" viewBox="0 0 15 15" fill="#f2f3f5" stroke="#a5a9b1"><circle cx="7.500" cy="7.500" r="6.500" /><path d="M4 7.500h7" /></svg>
        </button>
        <input
          type="range"
          aria-label="Zoom"
          defaultValue="53"
          className="h-[6px] w-[91px] appearance-none bg-[linear-gradient(#9a9ea7,#9a9ea7)] bg-[length:100%_1px] bg-center bg-no-repeat [&::-webkit-slider-thumb]:h-[6px] [&::-webkit-slider-thumb]:w-[2px] [&::-webkit-slider-thumb]:appearance-none [&::-webkit-slider-thumb]:bg-[#9a9ea7]"
        />
      </div>
    </footer>
  );
}

export default function App() {
  return (
    <div className={`flex h-screen flex-col overflow-hidden bg-[#dfe2ea] ${UI}`}>
      <Header />
      <Ribbon />
      <div className="h-[3px] shrink-0 bg-[#ccd0d9]" />
      <FormulaBar />
      <div className="h-1 shrink-0 bg-[#e6e8ee]" />
      <Sheet />
      <SheetTabs />
      <StatusBar />
    </div>
  );
}
